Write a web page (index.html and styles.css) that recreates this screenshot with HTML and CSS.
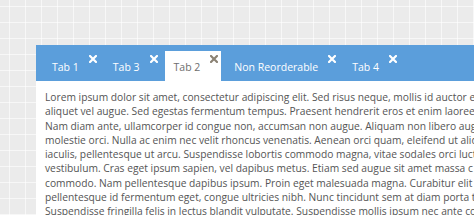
FILE: index.html
```html
<!DOCTYPE html>
<html>
<head>
<meta charset="utf-8">
<link rel="stylesheet" href="styles.css">
</head>
<body>
<div class="panel">
  <div class="tabbar">
    <div class="tab"><span>Tab 1</span><svg class="x" viewBox="0 0 8 8"><path d="M1 1L7 7M7 1L1 7"/></svg></div>
    <div class="tab"><span>Tab 3</span><svg class="x" viewBox="0 0 8 8"><path d="M1 1L7 7M7 1L1 7"/></svg></div>
    <div class="tab active"><span>Tab 2</span><svg class="x" viewBox="0 0 8 8"><path d="M1 1L7 7M7 1L1 7"/></svg></div>
    <div class="tab"><span>Non Reorderable</span><svg class="x" viewBox="0 0 8 8"><path d="M1 1L7 7M7 1L1 7"/></svg></div>
    <div class="tab"><span>Tab 4</span><svg class="x" viewBox="0 0 8 8"><path d="M1 1L7 7M7 1L1 7"/></svg></div>
  </div>
  <div class="content">
    <div class="line">Lorem ipsum dolor sit amet, consectetur adipiscing elit. Sed risus neque, mollis id auctor eget,</div>
    <div class="line">aliquet vel augue. Sed egestas fermentum tempus. Praesent hendrerit eros et enim laoreet,</div>
    <div class="line">Nam diam ante, ullamcorper id congue non, accumsan non augue. Aliquam non libero augue,</div>
    <div class="line">molestie orci. Nulla ac enim nec velit rhoncus venenatis. Aenean orci quam, eleifend ut aliquam</div>
    <div class="line">iaculis, pellentesque ut arcu. Suspendisse lobortis commodo magna, vitae sodales orci luctus</div>
    <div class="line">vestibulum. Cras eget ipsum sapien, vel dapibus metus. Etiam sed augue sit amet massa c</div>
    <div class="line">commodo. Nam pellentesque dapibus ipsum. Proin eget malesuada magna. Curabitur elit</div>
    <div class="line">pellentesque id fermentum eget, congue ultricies nibh. Nunc tincidunt sem at diam porta tincidunt.</div>
    <div class="line">Suspendisse fringilla felis in lectus blandit vulputate. Suspendisse mollis ipsum nec ante commodo.</div>
  </div>
</div>
</body>
</html>
```
FILE: styles.css
```css
html, body {
  margin: 0;
  height: 100%;
  overflow: hidden;
}
body {
  background-color: #ebebeb;
  background-image:
    linear-gradient(to right, rgba(255,255,255,0.6) 1px, transparent 1px),
    linear-gradient(to bottom, rgba(255,255,255,0.6) 1px, transparent 1px);
  background-size: 16px 16px;
  background-position: 9px 6px;
  font-family: "Open Sans", "Liberation Sans", sans-serif;
  padding: 45px 0 0 36px;
  box-sizing: border-box;
}
.panel {
  width: 520px;
  background: #fff;
}
.tabbar {
  background: #5b9edb;
  height: 36px;
  display: flex;
  align-items: flex-end;
  padding-left: 7px;
  gap: 4px;
  box-sizing: border-box;
}
.tab {
  position: relative;
  height: 30px;
  padding: 0 21px 0 9px;
  display: flex;
  align-items: center;
  color: #fff;
  font-size: 10.5px;
  white-space: nowrap;
}
.tab span {
  padding-top: 2px;
}
.tab.active {
  background: #fff;
  color: #6e6e6e;
}
.x {
  position: absolute;
  top: 4px;
  right: 3px;
  width: 8px;
  height: 8px;
  stroke: #fff;
  stroke-width: 2.2;
  stroke-linecap: square;
  fill: none;
}
.tab.active .x {
  stroke: #8b8274;
}
.content {
  padding: 9px 9px 0 9px;
  font-size: 10.25px;
  line-height: 14.25px;
  color: #555;
}
.line {
  white-space: nowrap;
}
```
